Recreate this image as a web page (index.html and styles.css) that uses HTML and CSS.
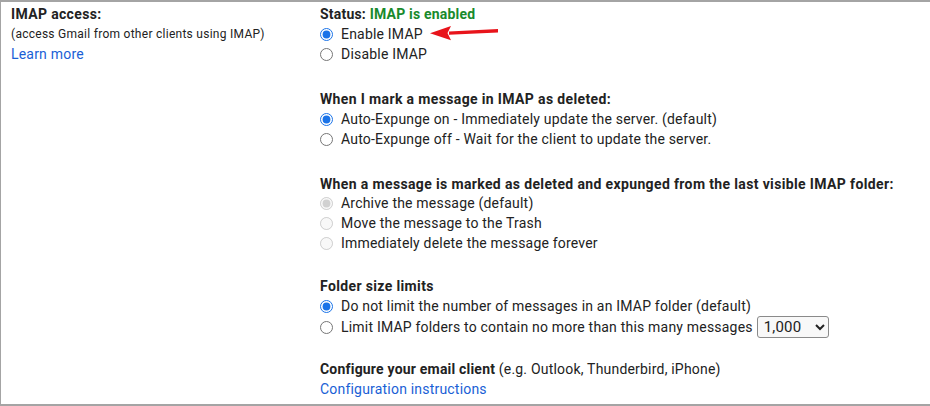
FILE: index.html
```html
<!DOCTYPE html>
<html>
<head>
<meta charset="utf-8">
<link rel="stylesheet" href="styles.css">
</head>
<body>
<div class="panel">
  <div class="label-col">
    <div class="title">IMAP access:</div>
    <div class="sub">(access Gmail from other clients using IMAP)</div>
    <a class="link" href="#">Learn more</a>
  </div>
  <div class="opts-col">
    <div class="group">
      <div class="head status">Status: <span class="ok">IMAP is enabled</span></div>
      <label class="opt"><input type="radio" name="imap" checked><span>Enable IMAP</span></label>
      <label class="opt"><input type="radio" name="imap"><span>Disable IMAP</span></label>
    </div>
    <div class="group g2">
      <div class="head">When I mark a message in IMAP as deleted:</div>
      <label class="opt"><input type="radio" name="exp" checked><span>Auto-Expunge on - Immediately update the server. (default)</span></label>
      <label class="opt"><input type="radio" name="exp"><span>Auto-Expunge off - Wait for the client to update the server.</span></label>
    </div>
    <div class="group g3">
      <div class="head">When a message is marked as deleted and expunged from the last visible IMAP folder:</div>
      <label class="opt off"><input type="radio" name="del" checked disabled><span>Archive the message (default)</span></label>
      <label class="opt off"><input type="radio" name="del" disabled><span>Move the message to the Trash</span></label>
      <label class="opt off"><input type="radio" name="del" disabled><span>Immediately delete the message forever</span></label>
    </div>
    <div class="group g4">
      <div class="head">Folder size limits</div>
      <label class="opt"><input type="radio" name="lim" checked><span>Do not limit the number of messages in an IMAP folder (default)</span></label>
      <label class="opt sel-row"><input type="radio" name="lim"><span>Limit IMAP folders to contain no more than this many messages</span>
        <select class="count"><option>1,000</option><option>2,000</option><option>5,000</option><option>10,000</option></select>
      </label>
    </div>
    <div class="group g5">
      <div class="line"><b class="strong">Configure your email client</b> (e.g. Outlook, Thunderbird, iPhone)</div>
      <a class="link" href="#">Configuration instructions</a>
    </div>
  </div>
  <svg class="arrow" width="70" height="20" viewBox="0 0 70 20">
    <path d="M68 7 L19 9.4 L19 12.8 L68 10.4 Z" fill="#e8141b"/>
    <path d="M0 11.3 L21 4 L17.5 11 L21 18.3 Z" fill="#e8141b"/>
  </svg>
</div>
</body>
</html>
```
FILE: styles.css
```css
html, body {
  margin: 0;
  padding: 0;
  background: #fff;
}
body {
  font-family: Roboto, "Liberation Sans", Arial, sans-serif;
  font-size: 14px;
  color: #222;
  letter-spacing: 0.2px;
}
.panel {
  position: relative;
  display: grid;
  grid-template-columns: 319px 1fr;
  border-top: 2px solid #a4a4a4;
  border-left: 1px solid #a4a4a4;
  border-bottom: 2px solid #a4a4a4;
  padding: 2px 0 5px;
  line-height: 20px;
}
.label-col {
  padding-left: 10px;
  display: flex;
  flex-direction: column;
  align-items: flex-start;
}
.title {
  font-weight: bold;
  letter-spacing: 0.35px;
}
.sub {
  font-size: 12px;
  letter-spacing: 0.27px;
}
.link {
  color: #1a5fd6;
  text-decoration: none;
}
.opts-col {
  display: flex;
  flex-direction: column;
}
.group {
  display: flex;
  flex-direction: column;
  align-items: flex-start;
}
.g2 { margin-top: 25px; }
.g3 { margin-top: 25px; }
.g4 { margin-top: 22px; }
.g5 { margin-top: 21px; }
.g3 .opt:first-of-type { margin-top: -1px; }
.g3 .opt:last-of-type { margin-bottom: 1px; }
.head {
  font-weight: bold;
  letter-spacing: 0.36px;
}
.status {
  letter-spacing: 0.2px;
}
.strong {
  font-weight: bold;
  letter-spacing: 0.2px;
}
.ok {
  color: #198a2c;
}
.opt {
  display: flex;
  align-items: center;
  gap: 8px;
  height: 20px;
}
.opt input {
  margin: 0;
  width: 13px;
  height: 13px;
  accent-color: #1a73e8;
}
.sel-row {
  height: 22px;
}
.count {
  margin-left: -4px;
  width: 72px;
  height: 22px;
  font-family: Roboto, "Liberation Sans", Arial, sans-serif;
  font-size: 15px;
  letter-spacing: 0.2px;
  color: #222;
  border: 1px solid #8a8a8a;
  border-radius: 3px;
  background: #f8f8f8;
  padding: 0 2px;
}
.arrow {
  position: absolute;
  left: 429px;
  top: 20px;
}
```
